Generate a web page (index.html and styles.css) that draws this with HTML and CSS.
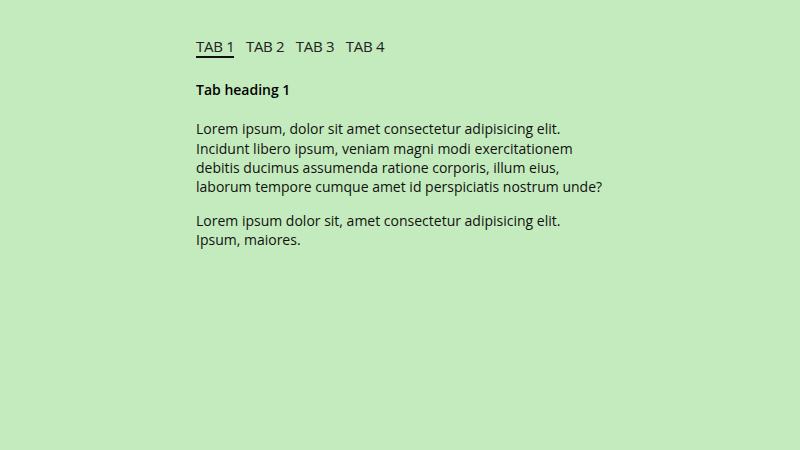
FILE: index.html
```html
<!DOCTYPE html>
<html lang="en">
<head>
  <meta charset="UTF-8" />
  <meta name="viewport" content="width=device-width, initial-scale=1.0" />
  <title>Tabs</title>
  <link rel="stylesheet" href="styles.css">
</head>
<body>
  <div class="container">
    <div class="tabs">
      <button class="tab active">TAB 1</button>
      <button class="tab">TAB 2</button>
      <button class="tab">TAB 3</button>
      <button class="tab">TAB 4</button>
    </div>
    <div class="panel">
      <h3>Tab heading 1</h3>
      <p>Lorem ipsum, dolor sit amet consectetur adipisicing elit. Incidunt libero ipsum, veniam magni modi exercitationem debitis ducimus assumenda ratione corporis, illum eius, laborum tempore cumque amet id perspiciatis nostrum unde?</p>
      <p>Lorem ipsum dolor sit, amet consectetur adipisicing elit. Ipsum, maiores.</p>
    </div>
  </div>
</body>
</html>
```

FILE: styles.css
```css
body {
  font-family: 'Open Sans', sans-serif;
  background-color: #c4ebbd;
  color: #111;
  margin: 0;
  font-size: 14px;
  line-height: 1.38;
}
.container {
  width: 410px;
  margin: 0 auto;
  padding-top: 37px;
  padding-left: 2px;
}
.tabs {
  display: flex;
  gap: 11.5px;
}
.tab {
  font-family: inherit;
  font-size: 15px;
  letter-spacing: -0.3px;
  line-height: 19px;
  background: none;
  border: none;
  padding: 0;
  margin: 0;
  color: #222;
  border-bottom: 2px solid transparent;
  cursor: pointer;
}
.tab.active {
  border-bottom-color: #111;
}
h3 {
  font-size: 14px;
  font-weight: 600;
  color: #000;
  margin: 22px 0 20px 0;
}
p {
  margin: 0 0 14px 0;
}
```
